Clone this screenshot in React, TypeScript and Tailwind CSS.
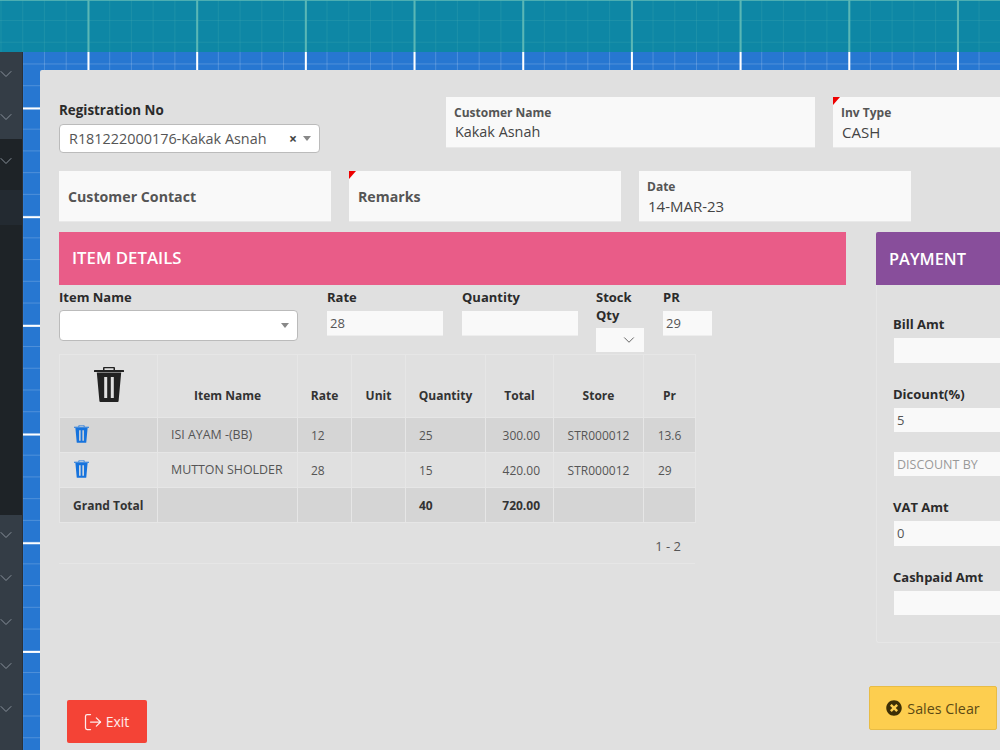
import React from 'react';
import { ChevronDown, LogOut } from 'lucide-react';
import { FaTimesCircle } from 'react-icons/fa';

const TrashIcon = ({ className }: { className: string }) => (
  <svg viewBox="0 0 30 35" className={className} fill="currentColor">
    <path fillRule="evenodd" d="M10 0h10a1 1 0 0 1 1 1v2h8.5a.5.5 0 0 1 .5.5V5H0V3.5a.5.5 0 0 1 .5-.5H9V1a1 1 0 0 1 1-1zm.5 1.2V3h9V1.2h-9z" />
    <path fillRule="evenodd" d="M2.8 5.5h24.4L24.6 34a1 1 0 0 1-1 1H6.4a1 1 0 0 1-1-1L2.8 5.5zM10.2 10v21h3V10h-3zm6.6 0v21h3V10h-3z" />
  </svg>
);

const InfoCard = ({ label, value, flag, className, valueClass = 'text-[15px]' }: { label: string; value?: string; flag?: boolean; className: string; valueClass?: string }) => (
  <div className={`relative h-[51px] shrink-0 bg-[#f9f9f9] border-b border-[#e9e9e9] px-[8px] ${className}`}>
    {flag && <span className="absolute left-0 top-0 w-0 h-0 border-t-[8px] border-t-[#ee0000] border-r-[7px] border-r-transparent" />}
    {value ? (
      <div className="pt-[8px]">
        <div className="text-[12px] leading-[16px] font-bold text-[#555]">{label}</div>
        <div className={`leading-[20px] text-[#444] mt-[1px] pl-[1px] ${valueClass}`}>{value}</div>
      </div>
    ) : (
      <div className="text-[14.2px] font-bold text-[#555] leading-[51px] pl-[1px]">{label}</div>
    )}
  </div>
);

const Field = ({ label, value, className }: { label: string; value?: string; className: string }) => (
  <div className={`shrink-0 ${className}`}>
    <div className="text-[13px] font-bold leading-[18px] text-[#2b2b2b] h-[23px]">{label}</div>
    <div className="h-[25px] bg-[#f9f9f9] border-b border-[#eee] px-[3px] text-[13px] leading-[25px] text-[#555]">{value}</div>
  </div>
);

const PayField = ({ label, value, tall }: { label: string; value?: string; tall?: boolean }) => (
  <div className="mt-[22px]">
    <div className="text-[13px] font-bold leading-[18px] text-[#2b2b2b] mb-[5px] -ml-px">{label}</div>
    <div className={`w-[200px] bg-[#f9f9f9] px-[3px] text-[13px] leading-[25px] text-[#555] ${tall ? 'h-[25px]' : 'h-[24px]'}`}>{value}</div>
  </div>
);

const th = 'border border-[#e6e6e6] font-bold text-[12px] text-[#333] align-middle pt-[20px]';
const td = 'border border-[#e6e6e6] text-[12px] text-[#555] px-[13px] pt-[1px]';
const tf = 'border border-[#e6e6e6] text-[12px] font-bold text-[#333] pt-[2px]';

const rows = [
  { name: 'ISI AYAM -(BB)', rate: '12', qty: '25', total: '300.00', store: 'STR000012', pr: '13.6', bg: 'bg-[#d5d5d5]' },
  { name: 'MUTTON SHOLDER', rate: '28', qty: '15', total: '420.00', store: 'STR000012', pr: '29', bg: 'bg-[#e0e0e0]' },
];

export default function App() {
  return (
    <div className="h-[750px] w-[1000px] overflow-hidden flex flex-col font-['Open_Sans','Noto_Sans',sans-serif] bg-[#2777d1] bg-[linear-gradient(90deg,#fff_2px,transparent_2px),linear-gradient(180deg,#fff_2px,transparent_2px),linear-gradient(90deg,rgba(255,255,255,.18)_1px,transparent_1px),linear-gradient(180deg,rgba(255,255,255,.18)_1px,transparent_1px)] bg-[length:108.7px_108.7px,108.7px_108.7px,21.74px_21.74px,21.74px_21.74px] bg-[position:87.5px_0,0_107.5px,0.5px_0,0_20px]">
      <div className="h-[52px] shrink-0 bg-[rgba(2,145,141,.65)]" />
      <div className="flex flex-1 min-h-0">
        <aside className="w-[23px] shrink-0 flex flex-col bg-[#343d46] border-r border-[#2a3138] text-[#87909a] overflow-hidden">
          {[0, 1, 2].map(i => (
            <div key={i} className={`h-[43.3px] shrink-0 -ml-[4px] pt-[12px] ${i === 2 ? 'bg-[#1e2327]' : ''}`}>
              <ChevronDown size={20} strokeWidth={1.2} />
            </div>
          ))}
          <div className="h-[8px] shrink-0 bg-[#1e2327]" />
          <div className="h-[35px] shrink-0 bg-[#232a31]" />
          <div className="h-[290px] shrink-0 bg-[#1e2327]" />
          {[0, 1, 2, 3, 4].map(i => (
            <div key={i} className="h-[43.6px] shrink-0 -ml-[4px] pt-[10px]">
              <ChevronDown size={20} strokeWidth={1.2} />
            </div>
          ))}
        </aside>

        <main className="ml-[17px] mt-[18px] w-[1100px] shrink-0 bg-[#e0e0e0] rounded-tl-[2px] pl-[19px] pt-[27px]">
          <div className="flex h-[51px]">
            <div className="w-[261px] shrink-0 pt-[5px]">
              <div className="text-[13.4px] font-bold leading-[17px] text-[#2b2b2b]">Registration No</div>
              <div className="mt-[5px] h-[29px] bg-white border border-[#bbb] rounded-[4px] flex items-center pl-[9px] pr-[8px] text-[14.4px] text-[#555]">
                <span className="flex-1 whitespace-nowrap">R181222000176-Kakak Asnah</span>
                <span className="text-[14px] font-bold text-[#444] mr-[6px]">×</span>
                <span className="w-0 h-0 border-x-[4px] border-x-transparent border-t-[5px] border-t-[#888]" />
              </div>
            </div>
            <InfoCard label="Customer Name" value="Kakak Asnah" valueClass="text-[14.4px]" className="ml-[126px] w-[369px]" />
            <InfoCard label="Inv Type" value="CASH" flag className="ml-[18px] w-[200px]" />
          </div>

          <div className="flex gap-[18px] mt-[23px]">
            <InfoCard label="Customer Contact" className="w-[272px]" />
            <InfoCard label="Remarks" flag className="w-[272px]" />
            <InfoCard label="Date" value="14-MAR-23" className="w-[272px]" />
          </div>

          <div className="flex mt-[10px]">
            <section className="w-[787px] shrink-0">
              <div className="h-[53px] bg-[#e95c88] text-white font-semibold text-[16.8px] leading-[51px] pl-[13px]">ITEM DETAILS</div>

              <div className="flex mt-[3px] h-[66px]">
                <div className="w-[239px] shrink-0">
                  <div className="text-[13px] font-bold leading-[18px] text-[#2b2b2b] h-[22px]">Item Name</div>
                  <div className="h-[31px] bg-white border border-[#bbb] rounded-[4px] flex items-center justify-end pr-[8px]">
                    <span className="w-0 h-0 border-x-[4px] border-x-transparent border-t-[5px] border-t-[#888]" />
                  </div>
                </div>
                <Field label="Rate" value="28" className="ml-[29px] w-[116px]" />
                <Field label="Quantity" className="ml-[19px] w-[116px]" />
                <div className="ml-[18px] w-[48px] shrink-0">
                  <div className="text-[13px] font-bold leading-[18px] text-[#2b2b2b]">Stock Qty</div>
                  <div className="h-[24px] mt-[4px] bg-[#f9f9f9] flex items-center justify-end pr-[6px] text-[#555]">
                    <ChevronDown size={18} strokeWidth={1.2} />
                  </div>
                </div>
                <Field label="PR" value="29" className="ml-[19px] w-[49px]" />
              </div>

              <table className="w-[636px] table-fixed border-collapse">
                <colgroup>
                  <col className="w-[98px]" />
                  <col className="w-[140px]" />
                  <col className="w-[54px]" />
                  <col className="w-[54px]" />
                  <col className="w-[80px]" />
                  <col className="w-[68px]" />
                  <col className="w-[90px]" />
                  <col className="w-[52px]" />
                </colgroup>
                <thead>
                  <tr className="h-[63px]">
                    <th className="border border-[#e6e6e6] text-[#222] pb-[4px]">
                      <TrashIcon className="w-[30px] h-[35px] mx-auto" />
                    </th>
                    <th className={th}>Item Name</th>
                    <th className={th}>Rate</th>
                    <th className={th}>Unit</th>
                    <th className={th}>Quantity</th>
                    <th className={th}>Total</th>
                    <th className={th}>Store</th>
                    <th className={th}>Pr</th>
                  </tr>
                </thead>
                <tbody>
                  {rows.map(r => (
                    <tr key={r.name} className={`h-[35px] ${r.bg}`}>
                      <td className={td}><TrashIcon className="w-[15px] h-[18px] ml-[1px] -mt-[4px] text-[#1673dd]" /></td>
                      <td className={`${td} !text-[12.4px] whitespace-nowrap`}>{r.name}</td>
                      <td className={td}>{r.rate}</td>
                      <td className={td}></td>
                      <td className={td}>{r.qty}</td>
                      <td className={`${td} text-right`}>{r.total}</td>
                      <td className={`${td} text-center !px-0`}>{r.store}</td>
                      <td className={`${td} text-center !px-0 ${r.pr === '29' ? '!text-left !pl-[14px]' : ''}`}>{r.pr}</td>
                    </tr>
                  ))}
                  <tr className="h-[35px] bg-[#d5d5d5]">
                    <td className={`${tf} pl-[13px]`}>Grand Total</td>
                    <td className={tf}></td>
                    <td className={tf}></td>
                    <td className={tf}></td>
                    <td className={`${tf} pl-[13px]`}>40</td>
                    <td className={`${tf} text-right pr-[13px]`}>720.00</td>
                    <td className={tf}></td>
                    <td className={tf}></td>
                  </tr>
                </tbody>
              </table>

              <div className="w-[636px] h-[41px] border-b border-[#e6e6e6] text-right pr-[14px] pt-[14px] text-[13px] leading-[18px] text-[#555]">1 - 2</div>
            </section>

            <section className="ml-[30px] w-[260px] shrink-0">
              <div className="h-[53px] bg-[#884e9b] rounded-t-[2px] text-white font-semibold text-[16.4px] leading-[53px] pl-[13px]">PAYMENT</div>
              <div className="h-[358px] border-l border-b border-[#e6e6e6] rounded-bl-[3px] pl-[17px]">
                <div className="pt-[8px]"><PayField label="Bill Amt" tall /></div>
                <PayField label="Dicount(%)" value="5" />
                <div className="mt-[20px] h-[24px] w-[200px] bg-[#f9f9f9] px-[3px] text-[12.5px] leading-[25px] text-[#999]">DISCOUNT BY</div>
                <PayField label="VAT Amt" value="0" tall />
                <PayField label="Cashpaid Amt" />
              </div>
            </section>
          </div>

          <div className="flex items-start">
            <button className="mt-[57px] ml-[8px] w-[80px] h-[43px] rounded-[2px] bg-[#f44336] text-white/90 text-[14px] flex items-center justify-center gap-[3px] pr-[2px]">
              <LogOut size={20} strokeWidth={1.5} />
              <span className="-mt-[1px]">Exit</span>
            </button>
            <button className="mt-[43px] ml-[722px] w-[128px] h-[44px] rounded-[2px] bg-[#fdce4f] border border-[#e8bc45] text-[#5c4a14] text-[14.3px] flex items-center justify-center gap-[5px]">
              <FaTimesCircle size={16} className="text-[#3d2f06]" />
              <span className="pt-[1px]">Sales Clear</span>
            </button>
          </div>
        </main>
      </div>
    </div>
  );
}
